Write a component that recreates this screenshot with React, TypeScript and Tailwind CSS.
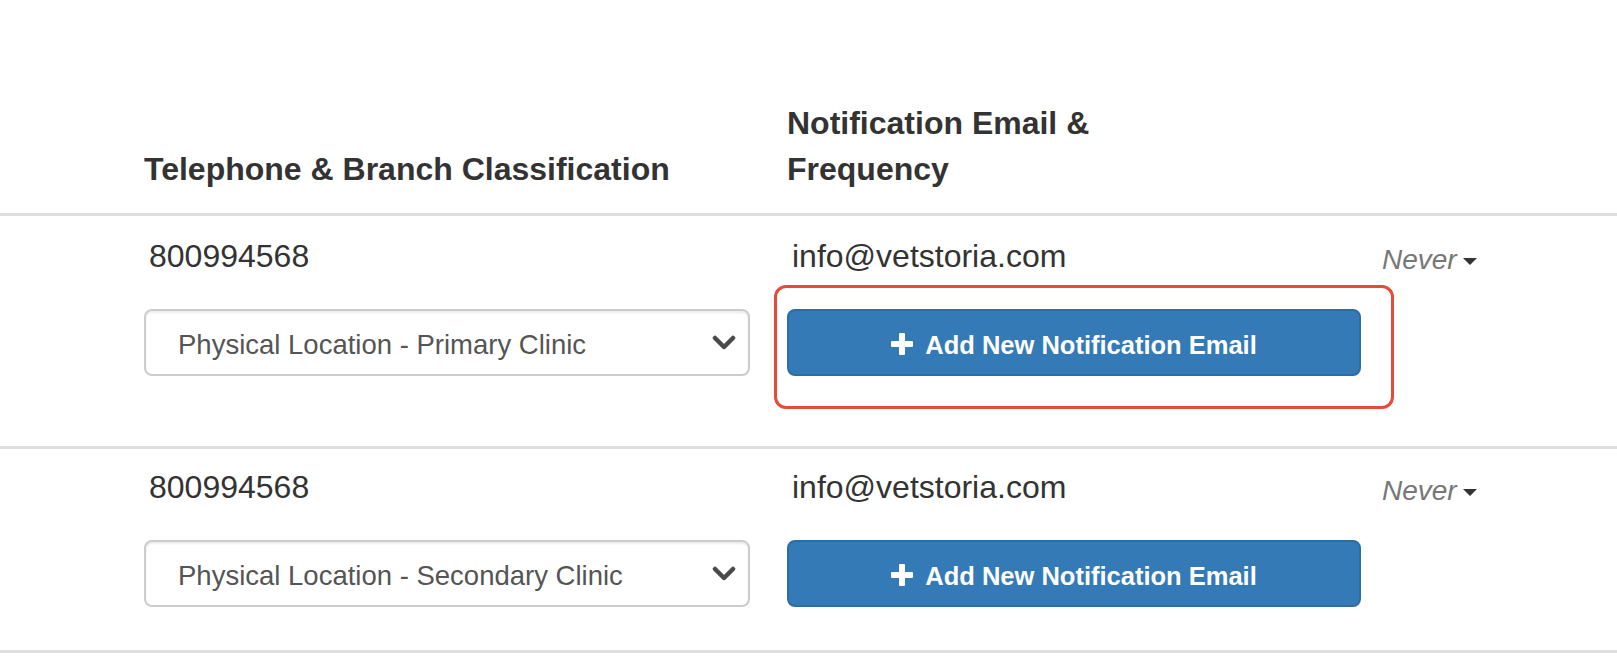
import { ReactNode } from 'react'

const rows = [
  { phone: '800994568', location: 'Physical Location - Primary Clinic', email: 'info@vetstoria.com', highlight: true },
  { phone: '800994568', location: 'Physical Location - Secondary Clinic', email: 'info@vetstoria.com', highlight: false },
]

function Chevron() {
  return (
    <svg width="24" height="16" viewBox="0 0 24 16" className="shrink-0">
      <polyline points="3,3 12,12 21,3" fill="none" stroke="#4a4a4a" strokeWidth="4.5" strokeLinecap="round" strokeLinejoin="round" />
    </svg>
  )
}

function Plus() {
  return (
    <svg width="22" height="22" viewBox="0 0 22 22" className="shrink-0">
      <rect x="8" y="0" width="6" height="22" rx="1" fill="#fff" />
      <rect x="0" y="8" width="22" height="6" rx="1" fill="#fff" />
    </svg>
  )
}

function LocationSelect({ value }: { value: string }) {
  return (
    <div className="flex h-[67px] w-[606px] items-center justify-between rounded-[8px] border-2 border-[#ccc] bg-white pl-[32px] pr-[12px] shadow-[inset_0_2px_2px_rgba(0,0,0,0.075)]">
      <span className="pt-[5px] text-[27.5px] text-[#555]">{value}</span>
      <Chevron />
    </div>
  )
}

function AddButton({ highlight }: { highlight: boolean }) {
  return (
    <div className="relative w-[574px]">
      {highlight && (
        <div className="pointer-events-none absolute -top-[24px] -right-[33px] -bottom-[33px] -left-[13px] rounded-[12px] border-[3px] border-[#e34c36]" />
      )}
      <button
        type="button"
        className="flex h-[67px] w-full items-center justify-center gap-[12px] rounded-[8px] border-2 border-[#2e6da4] bg-[#337ab7] pt-[3px] text-[25.5px] font-bold text-white"
      >
        <Plus />
        <span className="pt-[2px]">Add New Notification Email</span>
      </button>
    </div>
  )
}

function Cell({ className, children }: { className: string; children?: ReactNode }) {
  return <div className={className}>{children}</div>
}

export default function App() {
  return (
    <div className="h-[661px] w-full bg-white font-['Liberation_Sans',Arial,sans-serif] text-[#333]">
      <div className="flex h-[216px] items-end border-b-[3px] border-[#dedede] pb-[21px]">
        <Cell className="w-[144px] shrink-0" />
        <Cell className="w-[643px] shrink-0 text-[32px] font-bold leading-[46px]">Telephone &amp; Branch Classification</Cell>
        <Cell className="w-[340px] shrink-0 text-[32px] font-bold leading-[46px]">Notification Email &amp; Frequency</Cell>
      </div>

      {rows.map((row, i) => (
        <div
          key={i}
          className={`flex border-b-[3px] border-[#dedede] ${i === 0 ? 'h-[233px] pt-[17px]' : 'h-[204px] pt-[15px]'}`}
        >
          <Cell className="w-[144px] shrink-0" />
          <Cell className="flex w-[643px] shrink-0 flex-col gap-[30px]">
            <div className="pl-[5px] text-[32px] leading-[46px]">{row.phone}</div>
            <LocationSelect value={row.location} />
          </Cell>
          <Cell className="flex w-[595px] shrink-0 flex-col gap-[30px]">
            <div className="pl-[5px] text-[32px] leading-[46px]">{row.email}</div>
            <AddButton highlight={row.highlight} />
          </Cell>
          <Cell className="mt-[4px] flex h-[46px] items-center">
            <span className="text-[28px] italic text-[#777]">Never</span>
            <span className="ml-[6px] mt-[3px] h-0 w-0 border-x-[7px] border-t-[7px] border-x-transparent border-t-[#333]" />
          </Cell>
        </div>
      ))}
    </div>
  )
}
